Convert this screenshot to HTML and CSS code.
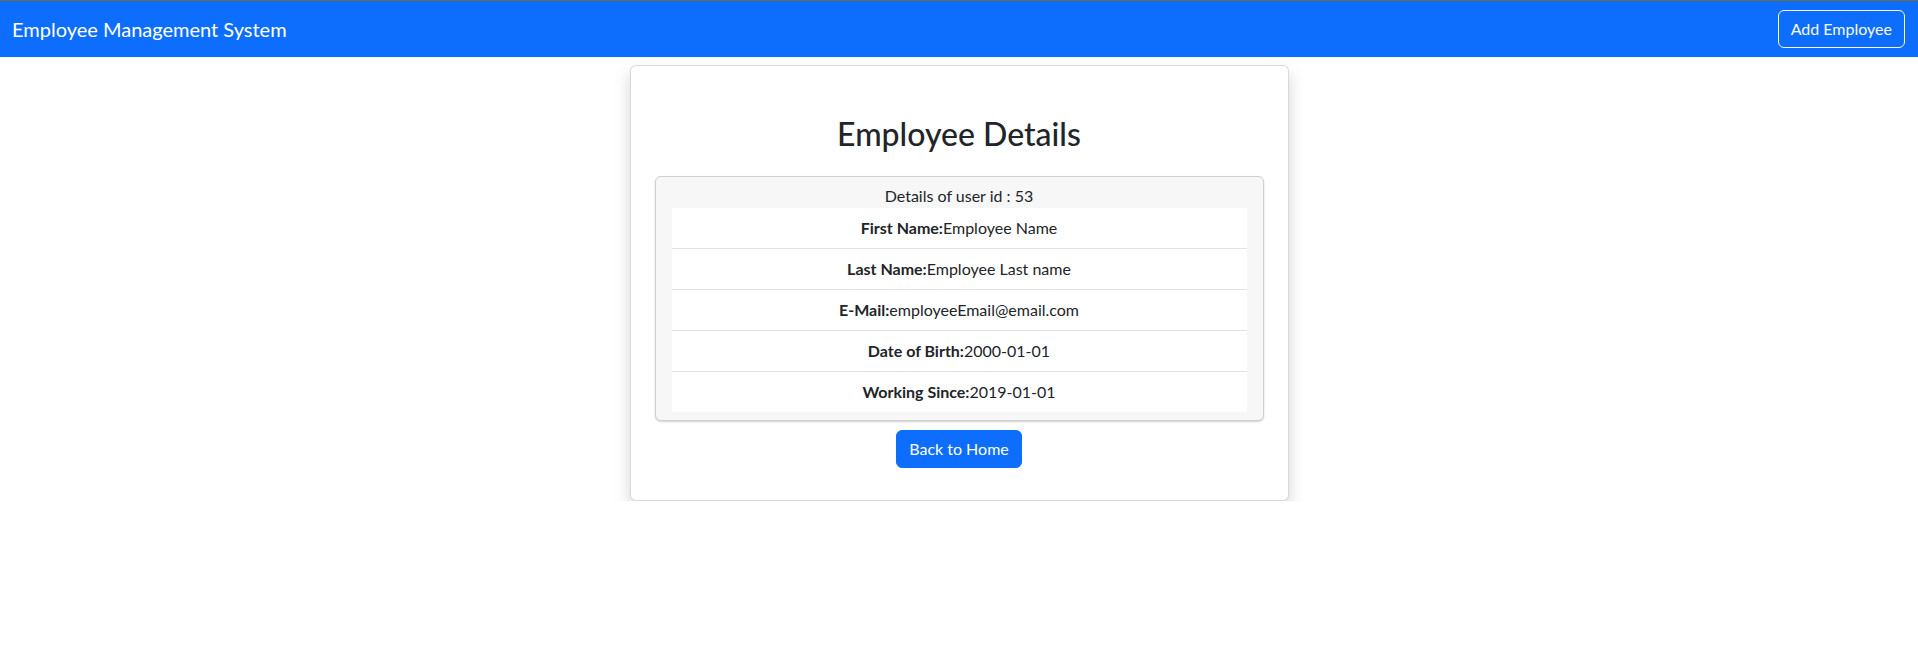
FILE: index.html
```html
<!DOCTYPE html>
<html lang="en">
<head>
<meta charset="utf-8">
<title>Employee Management System</title>
<link rel="stylesheet" href="styles.css">
</head>
<body>
<nav class="navbar">
  <span class="brand">Employee Management System</span>
  <button class="btn-outline">Add Employee</button>
</nav>
<main class="page">
  <section class="card">
    <h2 class="title">Employee Details</h2>
    <div class="details">
      <div class="details-head">Details of user id : 53</div>
      <ul class="list">
        <li class="item"><b>First Name:</b>Employee Name</li>
        <li class="item"><b>Last Name:</b>Employee Last name</li>
        <li class="item"><b>E-Mail:</b>employeeEmail@email.com</li>
        <li class="item"><b>Date of Birth:</b>2000-01-01</li>
        <li class="item"><b>Working Since:</b>2019-01-01</li>
      </ul>
    </div>
    <div class="actions">
      <button class="btn-primary">Back to Home</button>
    </div>
  </section>
</main>
</body>
</html>
```
FILE: styles.css
```css
* { box-sizing: border-box; }
html, body { margin: 0; padding: 0; background: #fff; }
body {
  font-family: "Lato", "Liberation Sans", sans-serif;
  font-size: 16px;
  line-height: 1.5;
  color: #212529;
}
.navbar {
  display: flex;
  align-items: center;
  justify-content: space-between;
  background: #0d6efd;
  border-top: 1px solid #6f6b3c;
  padding: 8px 13px 8px 12px;
  height: 57px;
}
.brand {
  color: #fff;
  font-size: 20px;
  line-height: 30px;
  padding: 5px 0;
}
.btn-outline {
  font-family: inherit;
  font-size: 16px;
  line-height: 24px;
  padding: 6px 12px;
  color: #f8f9fa;
  background: transparent;
  border: 1px solid #f8f9fa;
  border-radius: 6px;
}
.page { padding-top: 8px; }
.card {
  width: 659px;
  margin: 0 auto;
  background: #fff;
  border: 1px solid rgba(0, 0, 0, 0.15);
  border-radius: 6px;
  box-shadow: 0 8px 16px rgba(0, 0, 0, 0.17);
  padding: 49px 24px 32px;
}
.title {
  margin: 0 0 23px;
  text-align: center;
  font-size: 32px;
  font-weight: 500;
  line-height: 1.2;
  color: #212529;
}
.details {
  background: #f7f7f7;
  border: 1px solid #cfcfcf;
  border-radius: 6px;
  box-shadow: 0 1px 2px rgba(0, 0, 0, 0.18);
  padding: 7px 16px 8px;
}
.details-head {
  text-align: center;
  line-height: 24px;
}
.list {
  list-style: none;
  margin: 0;
  padding: 0;
  background: #fff;
}
.item {
  text-align: center;
  padding: 8px 16px;
  line-height: 24px;
  border-top: 1px solid #dee2e6;
}
.item:first-child { border-top: 0; }
.item b { font-weight: 700; }
.actions {
  display: flex;
  justify-content: center;
  margin-top: 9px;
}
.btn-primary {
  font-family: inherit;
  font-size: 16px;
  line-height: 24px;
  padding: 6px 12px;
  color: #fff;
  background: #0d6efd;
  border: 1px solid #0d6efd;
  border-radius: 6px;
}
```
